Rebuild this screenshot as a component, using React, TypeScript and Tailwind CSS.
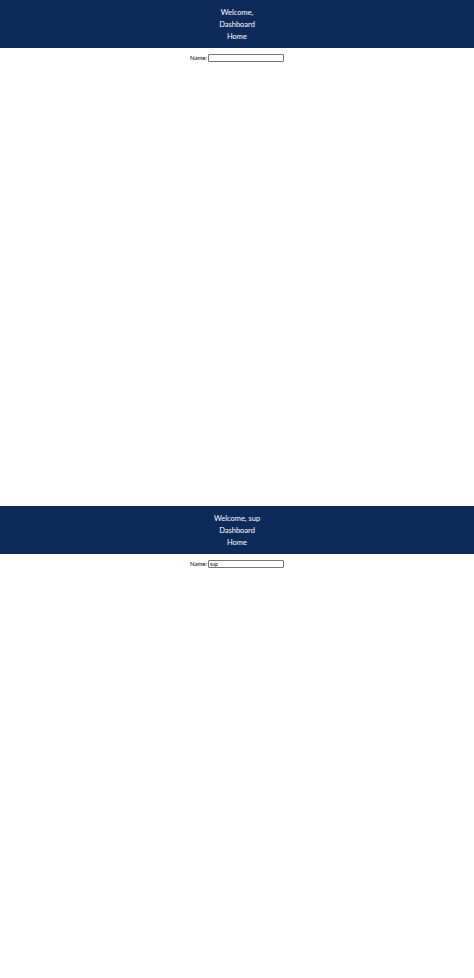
const Header = ({ name }: { name: string }) => (
  <header className="h-12 pt-px bg-[#0e2a5a] flex flex-col items-center justify-center text-white text-[7.5px] leading-[12px]">
    <p>Welcome, {name}</p>
    <p>Dashboard</p>
    <p>Home</p>
  </header>
)

const NameField = ({ value }: { value: string }) => (
  <div className="flex items-center justify-center gap-[1px] pt-[6px] text-[6px] leading-[8px] text-black">
    <label>Name:</label>
    <input
      readOnly
      value={value}
      className="w-[76px] h-[8px] border border-[#767676] rounded-[1px] px-[1px] text-[5px] leading-[6px] outline-none"
    />
  </div>
)

export default function App() {
  return (
    <div className="min-h-screen bg-white" style={{ fontFamily: 'Lato, "Open Sans", sans-serif' }}>
      <section className="h-[506px]">
        <Header name="" />
        <NameField value="" />
      </section>
      <section className="h-[472px]">
        <Header name="sup" />
        <NameField value="sup" />
      </section>
    </div>
  )
}
